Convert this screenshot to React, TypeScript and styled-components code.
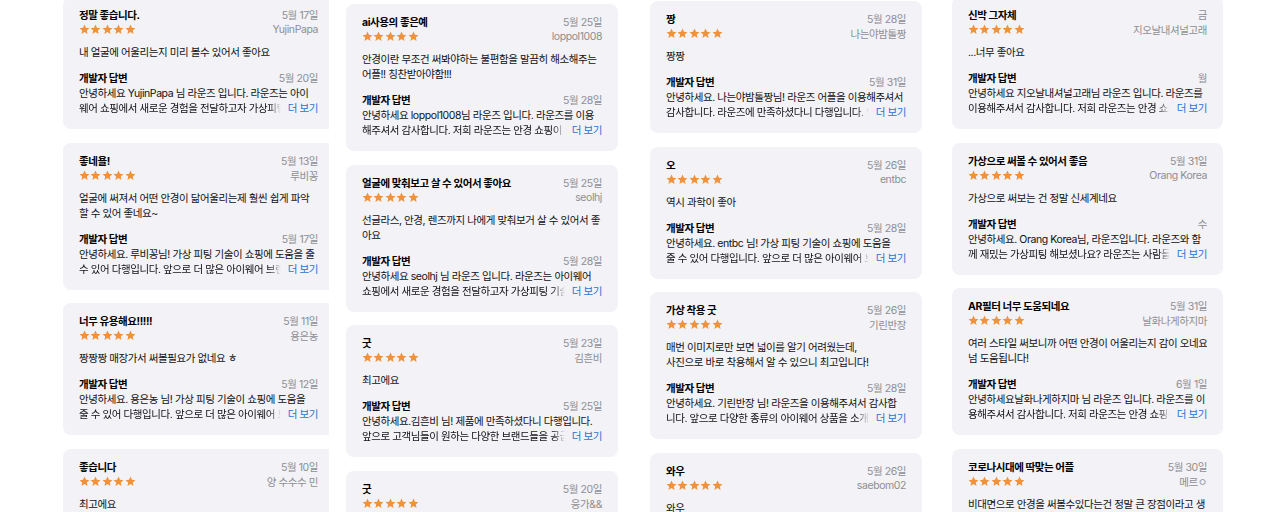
import React from 'react'
import styled, { createGlobalStyle } from 'styled-components'

interface Review {
  title: string
  date: string
  author: string
  body: string[]
  replyDate: string
  reply: [string, string]
}

interface ColumnData {
  width: number
  left: number
  top: number
  cut?: boolean
  reviews: Review[]
}

const GlobalStyle = createGlobalStyle`
  body {
    margin: 0;
    background: #ffffff;
    font-family: Inter, "Noto Sans CJK KR", sans-serif;
    -webkit-font-smoothing: antialiased;
  }
`

const Board = styled.div`
  display: flex;
  align-items: flex-start;
  height: 512px;
  overflow: hidden;
  padding-left: 63px;
  box-sizing: border-box;
`

const Column = styled.div<{ $width: number; $left: number; $top: number }>`
  display: flex;
  flex-direction: column;
  gap: 13.5px;
  flex-shrink: 0;
  width: ${(p) => p.$width}px;
  margin-left: ${(p) => p.$left}px;
  margin-top: ${(p) => p.$top}px;
`

const Card = styled.div<{ $cut?: boolean }>`
  background: #f2f2f7;
  border-radius: ${(p) => (p.$cut ? '8px 0 0 8px' : '8px')};
  padding: 10px ${(p) => (p.$cut ? 11 : 16)}px 13px 16px;
  font-size: 10.5px;
  letter-spacing: -0.42px;
  color: #111113;
`

const Row = styled.div`
  display: flex;
  justify-content: space-between;
  align-items: center;
  height: 15px;
  white-space: nowrap;
`

const Title = styled.span`
  font-weight: 700;
  color: #000;
`

const Meta = styled.span`
  color: #8e8e93;
`

const Stars = styled.div`
  display: flex;
  gap: 0.4px;
`

const Body = styled.div`
  margin-top: 8px;
`

const Line = styled.div`
  height: 15px;
  line-height: 15px;
  white-space: nowrap;
  overflow: hidden;
`

const DevRow = styled(Row)`
  margin-top: 10px;
`

const Reply = styled.div`
  margin-top: 1px;
`

const Tail = styled.div`
  display: flex;
  align-items: center;
  height: 15px;
  line-height: 15px;
`

const TailText = styled.span`
  flex: 1;
  min-width: 0;
  white-space: nowrap;
  overflow: hidden;
  -webkit-mask-image: linear-gradient(to right, #000 calc(100% - 14px), transparent calc(100% - 2px));
  mask-image: linear-gradient(to right, #000 calc(100% - 14px), transparent calc(100% - 2px));
`

const More = styled.span`
  margin-left: 5px;
  color: #1f74d4;
  white-space: nowrap;
`

const Star = () => (
  <svg width="11" height="11" viewBox="0 0 24 24">
    <path
      fill="#f0923b"
      d="M12 1.2l3.2 7.1 7.6.7-5.8 5.1 1.7 7.5L12 17.7l-6.7 3.9 1.7-7.5L1.2 9l7.6-.7z"
    />
  </svg>
)

const columns: ColumnData[] = [
  {
    width: 266,
    left: 0,
    top: -3,
    cut: true,
    reviews: [
      {
        title: '정말 좋습니다.',
        date: '5월 17일',
        author: 'YujinPapa',
        body: ['내 얼굴에 어울리는지 미리 볼수 있어서 좋아요'],
        replyDate: '5월 20일',
        reply: ['안녕하세요 YujinPapa 님 라운즈 입니다. 라운즈는 아이', '웨어 쇼핑에서 새로운 경험을 전달하고자 가상피팅 기'],
      },
      {
        title: '좋네욜!',
        date: '5월 13일',
        author: '루비꽁',
        body: ['얼굴에 써져서 어떤 안경이 닮어울리는제 훨씬 쉽게 파악', '할 수 있어 좋네요~'],
        replyDate: '5월 17일',
        reply: ['안녕하세요. 루비꽁님! 가상 피팅 기술이 쇼핑에 도움을 줄', '수 있어 다행입니다. 앞으로 더 많은 아이웨어 브랜드'],
      },
      {
        title: '너무 유용해요!!!!!',
        date: '5월 11일',
        author: '용은농',
        body: ['짱짱짱 매장가서 써볼필요가 없네요 ㅎ'],
        replyDate: '5월 12일',
        reply: ['안녕하세요. 용은농 님! 가상 피팅 기술이 쇼핑에 도움을', '줄 수 있어 다행입니다. 앞으로 더 많은 아이웨어 브랜'],
      },
      {
        title: '좋습니다',
        date: '5월 10일',
        author: '양 수수수 민',
        body: ['최고에요'],
        replyDate: '5월 11일',
        reply: ['안녕하세요. 양 수수수 민 님! 제품에 만족하셨다니 다행', '입니다. 앞으로 고객님들이 원하는 다양한 브랜드를'],
      },
    ],
  },
  {
    width: 272,
    left: 17,
    top: 4,
    reviews: [
      {
        title: 'ai사용의 좋은예',
        date: '5월 25일',
        author: 'loppol1008',
        body: ['안경이란 무조건 써봐야하는 불편함을 말끔히 해소해주는', '어플!! 칭찬받아야함!!!'],
        replyDate: '5월 28일',
        reply: ['안녕하세요 loppol1008님 라운즈 입니다. 라운즈를 이용', '해주셔서 감사합니다. 저희 라운즈는 안경 쇼핑이 더'],
      },
      {
        title: '얼굴에 맞춰보고 살 수 있어서 좋아요',
        date: '5월 25일',
        author: 'seolhj',
        body: ['선글라스, 안경, 렌즈까지 나에게 맞춰보거 살 수 있어서 좋', '아요'],
        replyDate: '5월 28일',
        reply: ['안녕하세요 seolhj 님 라운즈 입니다. 라운즈는 아이웨어', '쇼핑에서 새로운 경험을 전달하고자 가상피팅 기술을'],
      },
      {
        title: '굿',
        date: '5월 23일',
        author: '김흔비',
        body: ['최고에요'],
        replyDate: '5월 25일',
        reply: ['안녕하세요.김흔비 님! 제품에 만족하셨다니 다행입니다.', '앞으로 고객님들이 원하는 다양한 브랜드들을 공급하'],
      },
      {
        title: '굿',
        date: '5월 20일',
        author: '응가&&',
        body: ['좋아요'],
        replyDate: '5월 21일',
        reply: ['안녕하세요. 응가&& 님! 라운즈를 이용해주셔서 감사합', '니다. 앞으로 다양한 종류의 아이웨어 상품을 소개'],
      },
    ],
  },
  {
    width: 272,
    left: 32,
    top: 1,
    reviews: [
      {
        title: '짱',
        date: '5월 28일',
        author: '나는야밤톨짱',
        body: ['짱짱'],
        replyDate: '5월 31일',
        reply: ['안녕하세요. 나는야밤톨짱님! 라운즈 어플을 이용해주셔서', '감사합니다. 라운즈에 만족하셨다니 다행입니다. 앞'],
      },
      {
        title: '오',
        date: '5월 26일',
        author: 'entbc',
        body: ['역시 과학이 좋아'],
        replyDate: '5월 28일',
        reply: ['안녕하세요. entbc 님! 가상 피팅 기술이 쇼핑에 도움을', '줄 수 있어 다행입니다. 앞으로 더 많은 아이웨어 브랜'],
      },
      {
        title: '가상 착용 굿',
        date: '5월 26일',
        author: '기린반장',
        body: ['매번 이미지로만 보면 넓이를 알기 어려웠는데,', '사진으로 바로 착용해서 알 수 있으니 최고입니다!'],
        replyDate: '5월 28일',
        reply: ['안녕하세요. 기린반장 님!  라운즈을 이용해주셔서 감사합', '니다. 앞으로 다양한 종류의 아이웨어 상품을 소개하'],
      },
      {
        title: '와우',
        date: '5월 26일',
        author: 'saebom02',
        body: ['와우'],
        replyDate: '5월 28일',
        reply: ['안녕하세요. saebom02 님! 라운즈를 이용해주셔서 감사합', '니다. 앞으로 다양한 종류의 아이웨어 상품을 소개하'],
      },
    ],
  },
  {
    width: 271,
    left: 30,
    top: -3,
    reviews: [
      {
        title: '신박 그자체',
        date: '금',
        author: '지오날내셔널고래',
        body: ['...너무 좋아요'],
        replyDate: '월',
        reply: ['안녕하세요 지오날내셔널고래님 라운즈 입니다. 라운즈를', '이용해주셔서 감사합니다. 저희 라운즈는 안경 쇼핑이'],
      },
      {
        title: '가상으로 써볼 수 있어서 좋음',
        date: '5월 31일',
        author: 'Orang Korea',
        body: ['가상으로 써보는 건 정말 신세계네요'],
        replyDate: '수',
        reply: ['안녕하세요. Orang Korea님, 라운즈입니다. 라운즈와 함', '께 재밌는 가상피팅 해보셨나요? 라운즈는 사람들이'],
      },
      {
        title: 'AR필터 너무 도움되네요',
        date: '5월 31일',
        author: '날화나게하지마',
        body: ['여러 스타일 써보니까 어떤 안경이 어울리는지 감이 오네요', '넘 도움됩니다!'],
        replyDate: '6월 1일',
        reply: ['안녕하세요날화나게하지마 님 라운즈 입니다. 라운즈를 이', '용해주셔서 감사합니다. 저희 라운즈는 안경 쇼핑이'],
      },
      {
        title: '코로나시대에 딱맞는 어플',
        date: '5월 30일',
        author: '메르ㅇ',
        body: ['비대면으로 안경을 써볼수있다는건 정말 큰 장점이라고 생', '각합니다'],
        replyDate: '6월 1일',
        reply: ['안녕하세요. 메르ㅇ 님! 가상 피팅 기술이 쇼핑에 도움을', '줄 수 있어 다행입니다. 앞으로 더 많은 아이웨어 브랜'],
      },
    ],
  },
]

const ReviewCard = ({ review, cut }: { review: Review; cut?: boolean }) => (
  <Card $cut={cut}>
    <Row>
      <Title>{review.title}</Title>
      <Meta>{review.date}</Meta>
    </Row>
    <Row>
      <Stars>
        {[0, 1, 2, 3, 4].map((i) => (
          <Star key={i} />
        ))}
      </Stars>
      <Meta>{review.author}</Meta>
    </Row>
    <Body>
      {review.body.map((line, i) => (
        <Line key={i}>{line}</Line>
      ))}
    </Body>
    <DevRow>
      <Title>개발자 답변</Title>
      <Meta>{review.replyDate}</Meta>
    </DevRow>
    <Reply>
      <Line>{review.reply[0]}</Line>
      <Tail>
        <TailText>{review.reply[1]}</TailText>
        <More>더 보기</More>
      </Tail>
    </Reply>
  </Card>
)

const App = () => {
  return (
    <>
      <GlobalStyle />
      <Board>
        {columns.map((col, i) => (
          <Column key={i} $width={col.width} $left={col.left} $top={col.top}>
            {col.reviews.map((r, j) => (
              <ReviewCard key={j} review={r} cut={col.cut} />
            ))}
          </Column>
        ))}
      </Board>
    </>
  )
}

export default App
